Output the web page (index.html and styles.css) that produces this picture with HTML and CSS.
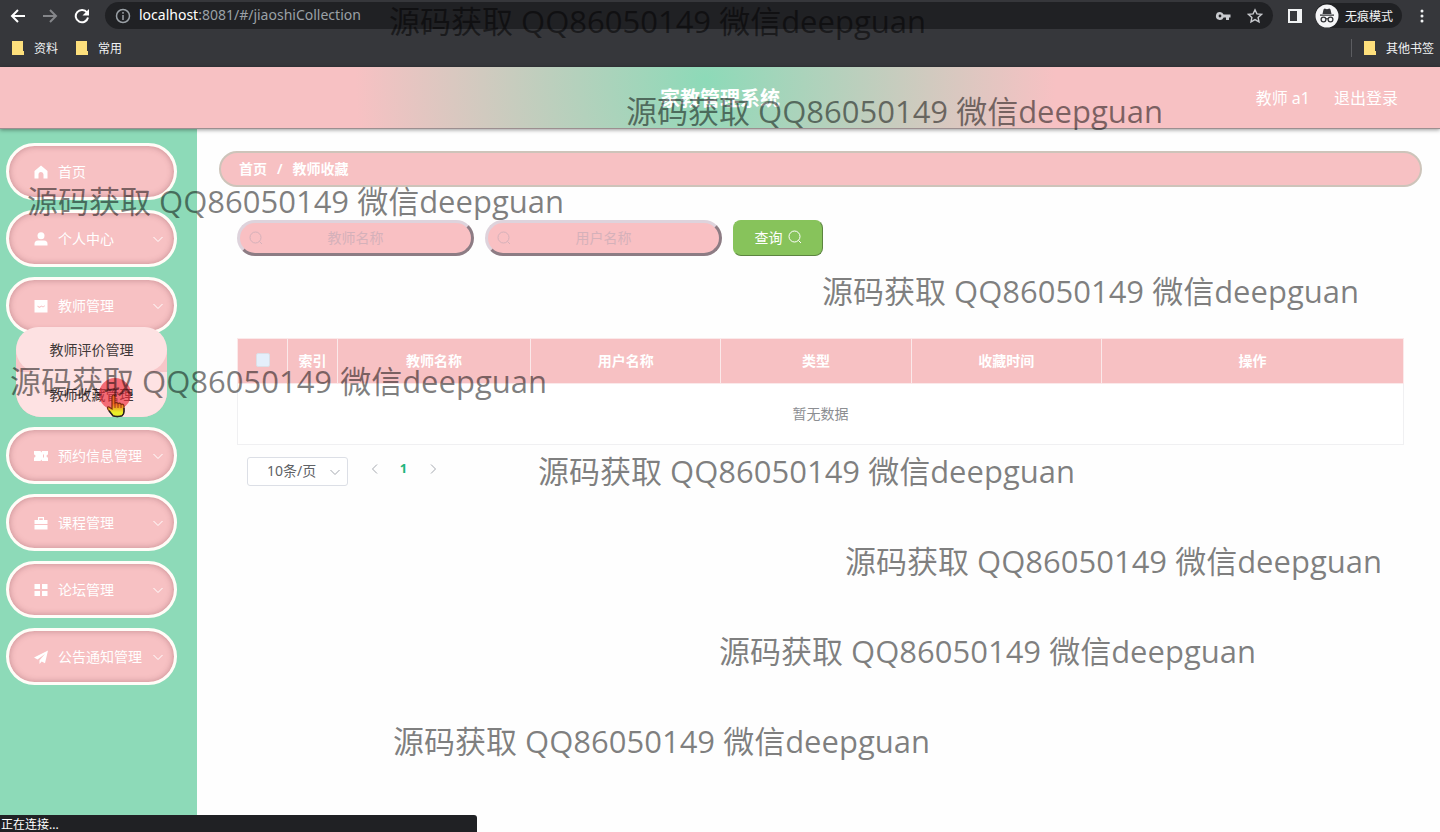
FILE: index.html
```html
<!DOCTYPE html>
<html lang="zh-CN">
<head>
    <meta charset="UTF-8">
    <meta name="viewport" content="width=device-width, initial-scale=1.0">
    <title>家教管理系统</title>
    <link rel="stylesheet" href="styles.css">
</head>
<body>
    <!-- browser bar -->
    <div class="browser">
        <div class="toolbar">
            <button class="tool-btn" aria-label="后退"><svg width="16" height="16" viewBox="0 0 16 16" fill="none" stroke="#fff" stroke-width="2"><path d="M15 8H2M8 2L2 8l6 6"/></svg></button>
            <button class="tool-btn" aria-label="前进"><svg width="16" height="16" viewBox="0 0 16 16" fill="none" stroke="#85868a" stroke-width="2"><path d="M1 8h13M8 2l6 6-6 6"/></svg></button>
            <button class="tool-btn" aria-label="刷新"><svg width="16" height="16" viewBox="0 0 16 16"><path d="M13 4.5A6.2 6.2 0 1 0 14 9.500" fill="none" stroke="#fff" stroke-width="2"/><path d="M15 1v6.500H8.500z" fill="#fff"/></svg></button>
            <div class="address">
                <svg width="16" height="16" viewBox="0 0 16 16" fill="none" stroke="#9aa0a6" stroke-width="1.500"><circle cx="8" cy="8" r="6.500"/><path d="M8 7v5M8 4v1.700"/></svg>
                <span class="url"><span class="host">localhost</span>:8081/#/jiaoshiCollection</span>
                <svg width="16" height="16" viewBox="0 0 16 16"><path d="M5 4a4 4 0 1 0 3.600 5.500H11V12h3V9.500h1.500v-3H8.600A4 4 0 0 0 5 4zm0 2.600a1.400 1.400 0 1 1 0 2.800 1.400 1.400 0 0 1 0-2.800z" fill="#c8cace"/></svg>
                <svg width="16" height="16" viewBox="0 0 16 16"><path d="M8 1.800l1.900 4.100 4.500.5-3.300 3 .9 4.400L8 11.600l-4 2.200.9-4.400-3.300-3 4.500-.5z" fill="none" stroke="#c8cace" stroke-width="1.400"/></svg>
            </div>
            <button class="tool-btn panel-btn" aria-label="侧边栏"><svg width="16" height="16" viewBox="0 0 16 16"><path d="M1 1h14v14H1zM3 3v10h7V3z" fill="#f1f3f4" fill-rule="evenodd"/></svg></button>
            <button class="incognito">
                <svg width="24" height="24" viewBox="0 0 24 24"><circle cx="12" cy="12" r="11.500" fill="#f5f5f7"/><path d="M8.500 5.500l1-1 2.500.7 2.500-.7 1 1 1 4.500h-9zM5 10.500h14v1.200H5z" fill="#35363a"/><g fill="none" stroke="#35363a" stroke-width="1.300"><circle cx="8.500" cy="15.500" r="2.400"/><circle cx="15.500" cy="15.500" r="2.400"/><path d="M11 15q1-.8 2 0"/></g></svg>
                <span>无痕模式</span>
            </button>
            <button class="tool-btn" aria-label="菜单"><svg width="16" height="16" viewBox="0 0 16 16" fill="#f1f3f4"><circle cx="8" cy="3" r="1.500"/><circle cx="8" cy="8" r="1.500"/><circle cx="8" cy="13" r="1.500"/></svg></button>
        </div>
        <div class="bookmarks">
            <a href="#"><svg width="12" height="14" viewBox="0 0 12 14"><path d="M0 0h11v10h1v4H0z" fill="#fddf7c"/></svg>资料</a>
            <a href="#"><svg width="12" height="14" viewBox="0 0 12 14"><path d="M0 0h11v10h1v4H0z" fill="#fddf7c"/></svg>常用</a>
            <a href="#" class="other"><svg width="12" height="14" viewBox="0 0 12 14"><path d="M0 0h11v10h1v4H0z" fill="#fddf7c"/></svg>其他书签</a>
        </div>
    </div>

    <header class="header">
        <h1>家教管理系统</h1>
        <div class="user">
            <span>教师 a1</span>
            <a href="#">退出登录</a>
        </div>
    </header>

    <div class="container">
        <nav class="sidebar">
            <a href="#" class="menu-item">
                <svg class="icon" viewBox="0 0 14 14"><path d="M7 0.500L0.500 6v7.500h4V9.500a2.500 2.500 0 0 1 5 0v4h4V6z"/></svg>
                <span>首页</span>
            </a>
            <a href="#" class="menu-item">
                <svg class="icon" viewBox="0 0 14 14"><circle cx="7" cy="3.700" r="3.500"/><path d="M0.500 13.500V12q0-3.500 3.500-3.500h6q3.500 0 3.500 3.500v1.500z"/></svg>
                <span>个人中心</span>
                <svg class="arrow" viewBox="0 0 10 10"><path d="M0.500 3L5 7.500 9.500 3"/></svg>
            </a>
            <a href="#" class="menu-item">
                <svg class="icon" viewBox="0 0 14 14"><path d="M0.500 1h13v12.500h-13zM3.500 6.500v1.200l2 1.300 2-1.500 1.500 1 2-1.500V6.200L9 7.500l-1.500-1-2 1.300z" fill-rule="evenodd"/></svg>
                <span>教师管理</span>
                <svg class="arrow" viewBox="0 0 10 10"><path d="M0.500 3L5 7.500 9.500 3"/></svg>
            </a>
            <div class="submenu">
                <a href="#">教师评价管理</a>
                <a href="#">教师收藏管理</a>
                <svg class="pointer" width="36" height="44" viewBox="0 0 36 44">
                    <defs>
                        <linearGradient id="hand" x1="0" y1="0" x2="0" y2="1">
                            <stop offset="0.400" stop-color="#f0641e"/>
                            <stop offset="0.800" stop-color="#e8ee28"/>
                        </linearGradient>
                    </defs>
                    <circle cx="17" cy="17" r="16" fill="#ee2b3a" fill-opacity="0.650"/>
                    <path d="M14 20q0-2 1.500-2t1.500 2v6q2-1 3 .5 2-1 3 .8 3-.8 3 2v5q0 3-2 4.500-5 1.500-9 0l-5-6.300q-1.500-3 1-2.500l3 2z" fill="url(#hand)" stroke="#7a2a10" stroke-width="1.200"/>
                    <path d="M26 31v3.300q0 3-2 4.500-5 1.500-9 0l-4-5" fill="none" stroke="#222" stroke-width="1.400"/>
                    <path d="M17 26v5M20 27v4M23 28v3" fill="none" stroke="#a03018"/>
                </svg>
            </div>
            <a href="#" class="menu-item">
                <svg class="icon" viewBox="0 0 14 14"><path d="M0 2h6.500l.8 1.500.8-1.500H14v3.500a1.500 1.500 0 0 0 0 3V12H8.100l-.8-1.500-.8 1.500H0V8.500a1.500 1.500 0 0 0 0-3zM9 5.500v3h1v-3z" fill-rule="evenodd"/></svg>
                <span>预约信息管理</span>
                <svg class="arrow" viewBox="0 0 10 10"><path d="M0.500 3L5 7.500 9.500 3"/></svg>
            </a>
            <a href="#" class="menu-item">
                <svg class="icon" viewBox="0 0 14 14"><path d="M4 4V1h6v3h3.500v4H.5V4zM5.200 4h3.600V2.200H5.200zM.5 9h13v4.500H.5z" fill-rule="evenodd"/></svg>
                <span>课程管理</span>
                <svg class="arrow" viewBox="0 0 10 10"><path d="M0.500 3L5 7.500 9.500 3"/></svg>
            </a>
            <a href="#" class="menu-item">
                <svg class="icon" viewBox="0 0 14 14"><path d="M.5 1h5.500v5H.5zM8 1h5.500v5H8zM.5 8h5.500v5H.5zM8 8h5.500v5H8z"/></svg>
                <span>论坛管理</span>
                <svg class="arrow" viewBox="0 0 10 10"><path d="M0.500 3L5 7.500 9.500 3"/></svg>
            </a>
            <a href="#" class="menu-item">
                <svg class="icon" viewBox="0 0 14 14"><path d="M14 0.500L0 7.500l3.500 2L11 4 5.500 10.300V14l2.200-2.500 3.300 1.700z"/></svg>
                <span>公告通知管理</span>
                <svg class="arrow" viewBox="0 0 10 10"><path d="M0.500 3L5 7.500 9.500 3"/></svg>
            </a>
        </nav>

        <main class="main">
            <div class="breadcrumb">
                <a href="#">首页</a>
                <span>/</span>
                <span>教师收藏</span>
            </div>

            <div class="content">
                <form class="search">
                    <div class="field">
                        <svg viewBox="0 0 14 14"><circle cx="6.500" cy="6.500" r="5.500"/><path d="M10.500 10.500L13 13"/></svg>
                        <input type="text" aria-label="教师名称" placeholder="教师名称">
                    </div>
                    <div class="field">
                        <svg viewBox="0 0 14 14"><circle cx="6.500" cy="6.500" r="5.500"/><path d="M10.500 10.500L13 13"/></svg>
                        <input type="text" aria-label="用户名称" placeholder="用户名称">
                    </div>
                    <button type="button" class="btn">查询
                        <svg viewBox="0 0 14 14"><circle cx="6.500" cy="6.500" r="5.500"/><path d="M10.500 10.500L13 13"/></svg>
                    </button>
                </form>

                <table class="table">
                    <thead>
                        <tr>
                            <th class="col-small"><input type="checkbox" aria-label="全选"></th>
                            <th class="col-small">索引</th>
                            <th class="col-name">教师名称</th>
                            <th>用户名称</th>
                            <th>类型</th>
                            <th>收藏时间</th>
                            <th class="col-action">操作</th>
                        </tr>
                    </thead>
                    <tbody>
                        <tr>
                            <td colspan="7">暂无数据</td>
                        </tr>
                    </tbody>
                </table>

                <div class="pagination">
                    <div class="page-size">
                        <select aria-label="每页条数">
                            <option>10条/页</option>
                        </select>
                        <svg viewBox="0 0 10 10"><path d="M0.500 3L5 7.500 9.500 3"/></svg>
                    </div>
                    <button class="page-btn" aria-label="上一页"><svg viewBox="0 0 10 10"><path d="M7 0.500L2.500 5 7 9.500"/></svg></button>
                    <button class="page-btn active">1</button>
                    <button class="page-btn" aria-label="下一页"><svg viewBox="0 0 10 10"><path d="M3 0.500L7.500 5 3 9.500"/></svg></button>
                </div>
            </div>
        </main>
    </div>

    <div class="status">正在连接...</div>

    <div class="watermarks">
        <span class="mark-1">源码获取 QQ86050149 微信deepguan</span>
        <span class="mark-2">源码获取 QQ86050149 微信deepguan</span>
        <span class="mark-3">源码获取 QQ86050149 微信deepguan</span>
        <span class="mark-4">源码获取 QQ86050149 微信deepguan</span>
        <span class="mark-5">源码获取 QQ86050149 微信deepguan</span>
        <span class="mark-6">源码获取 QQ86050149 微信deepguan</span>
        <span class="mark-7">源码获取 QQ86050149 微信deepguan</span>
        <span class="mark-8">源码获取 QQ86050149 微信deepguan</span>
        <span class="mark-9">源码获取 QQ86050149 微信deepguan</span>
    </div>
</body>
</html>
```
FILE: styles.css
```css
* {
    box-sizing: border-box;
}
body {
    font-family: "Noto Sans", "Noto Sans CJK SC", sans-serif;
    font-size: 14px;
    margin: 0;
    min-height: 100vh;
    display: flex;
    flex-direction: column;
    position: relative;
    overflow: hidden;
    background: #fefefe;
}
a {
    color: inherit;
    text-decoration: none;
}
button, input, select {
    font-family: inherit;
    font-size: 14px;
}
button {
    border: none;
    padding: 0;
    background: none;
    color: inherit;
    cursor: pointer;
}

/* browser bar */
.browser {
    background: #36373b;
    color: #f1f3f4;
    height: 67px;
    font-size: 12px;
}
.toolbar {
    display: flex;
    align-items: center;
    height: 31px;
    padding: 0 10px;
    gap: 16px;
}
.tool-btn {
    display: flex;
}
.address {
    flex: 1;
    display: flex;
    align-items: center;
    gap: 16px;
    height: 27px;
    padding: 0 10px;
    margin: 0 -2px 0 -1px;
    border-radius: 14px;
    background: #202124;
}
.url {
    flex: 1;
    margin-left: -8px;
    padding-bottom: 2px;
    font-size: 14px;
    color: #9aa0a6;
}
.host {
    color: #fff;
}
.incognito {
    display: flex;
    align-items: center;
    gap: 6px;
    height: 25px;
    margin: 0 -4px 0 -5px;
    padding-right: 9px;
    border-radius: 13px;
    background: #202124;
    font-size: 12px;
}
.panel-btn {
    margin-right: 1px;
}
.bookmarks {
    display: flex;
    align-items: center;
    height: 34px;
    padding: 0 6px 0 12px;
    gap: 18px;
}
.bookmarks a {
    display: flex;
    align-items: center;
    gap: 10px;
}
.bookmarks .other {
    margin-left: auto;
    padding-left: 12px;
    border-left: 1px solid #5c5d61;
}

/* header */
.header {
    position: relative;
    height: 62px;
    display: flex;
    align-items: center;
    justify-content: center;
    color: #fff;
    background: radial-gradient(circle at 49% 20%, #8ddab8 0, #f7c1c3 350px);
    border-bottom: 1px solid #9c8f90;
    box-shadow: 0 1px 4px rgba(0, 0, 0, 0.4);
}
.header h1 {
    margin: 0;
    font-size: 20px;
}
.user {
    position: absolute;
    right: 42px;
    display: flex;
    gap: 24px;
    padding-bottom: 2px;
    font-size: 16px;
}

.container {
    flex: 1;
    display: flex;
}

/* sidebar */
.sidebar {
    width: 197px;
    padding: 14px 20px 14px 6px;
    background: #8ddab8;
}
.menu-item {
    display: flex;
    align-items: center;
    height: 57px;
    margin-bottom: 10px;
    padding: 0 11px 0 25px;
    border: 3px solid #fffdf8;
    border-radius: 30px;
    background: #f7c1c3;
    box-shadow: inset 0 0 6px rgba(120, 60, 70, 0.4);
    color: #fff;
}
.menu-item span {
    flex: 1;
    margin-left: 10px;
    padding-bottom: 2px;
    white-space: nowrap;
}
.icon {
    width: 14px;
    height: 14px;
    fill: #fff;
}
.arrow {
    width: 10px;
    height: 10px;
    fill: none;
    stroke: #fff;
}
.submenu {
    position: relative;
    margin: -17px 10px 10px;
    border-radius: 25px;
    background: #f7c6c8;
    color: #403838;
}
.submenu a {
    display: block;
    height: 45px;
    line-height: 45px;
    text-align: center;
    border-radius: 25px;
    background: #fde1e2;
}
.submenu a + a {
    border-radius: 0 0 25px 25px;
    background: rgba(254, 228, 229, 0.9);
}
.pointer {
    position: absolute;
    left: 82px;
    top: 50px;
}

/* main */
.main {
    flex: 1;
    padding: 22px 18px 0 22px;
}
.breadcrumb {
    display: flex;
    align-items: center;
    gap: 10px;
    height: 36px;
    padding: 0 18px 2px;
    border: 2px solid #cdc4ba;
    border-radius: 18px;
    background: #f7c1c3;
    color: #fff;
    font-weight: 600;
}
.content {
    padding: 33px 18px 0;
}
.search {
    display: flex;
    gap: 11px;
    margin-bottom: 82px;
}
.field {
    position: relative;
    width: 237px;
}
.field svg {
    position: absolute;
    left: 12px;
    top: 11px;
    width: 14px;
    height: 14px;
    fill: none;
    stroke: #d5b1ba;
}
.field input {
    width: 100%;
    height: 36px;
    padding: 0 30px 2px;
    border: 3px solid;
    border-color: #ded3dc #8d7c84 #8d7c84 #ded3dc;
    border-radius: 18px;
    background: #f9c0c3;
    text-align: center;
}
.field input::placeholder {
    color: #d5b1ba;
}
.btn {
    display: flex;
    align-items: center;
    justify-content: center;
    gap: 5px;
    width: 90px;
    height: 36px;
    padding-bottom: 2px;
    border: 1px solid;
    border-color: #87c35b #5c8440 #5c8440 #87c35b;
    border-radius: 8px;
    background: #87c35b;
    color: #fff;
}
.btn svg {
    width: 14px;
    height: 14px;
    fill: none;
    stroke: #fff;
}

.table {
    width: 100%;
    table-layout: fixed;
    border-collapse: collapse;
}
.table th {
    height: 45px;
    padding: 0 0 2px;
    border: 1px solid #fbe9ea;
    background: #f7c1c3;
    color: #fff;
}
.table td {
    height: 61px;
    padding: 0 0 2px;
    border: 1px solid #f0f0f2;
    background: #fff;
    color: #8c8e92;
    text-align: center;
}
.table .col-small {
    width: 50px;
}
.table .col-name {
    width: 193px;
}
.table .col-action {
    width: 302px;
}
.table input {
    appearance: none;
    display: block;
    width: 14px;
    height: 14px;
    margin: 0 auto;
    border: 1px solid #dcdfe6;
    border-radius: 2px;
    background: #e4effb;
}

.pagination {
    display: flex;
    align-items: center;
    padding: 11px 10px;
}
.page-size {
    position: relative;
    width: 101px;
    margin-right: 12px;
}
.page-size select {
    appearance: none;
    display: block;
    width: 100%;
    height: 29px;
    padding: 0 19px 2px;
    border: 1px solid #dcdfe6;
    border-radius: 3px;
    background: #fff;
    color: #606266;
}
.page-size svg {
    position: absolute;
    right: 8px;
    top: 10px;
}
.pagination svg {
    width: 10px;
    height: 10px;
    fill: none;
    stroke: #a4a8af;
}
.page-btn {
    width: 29px;
    height: 24px;
    margin-bottom: 7px;
    color: #606266;
}
.page-btn.active {
    color: #1fb57c;
    font-size: 13px;
    font-weight: 700;
}

/* connection status */
.status {
    position: absolute;
    left: 0;
    bottom: 0;
    width: 477px;
    height: 17px;
    padding-left: 1px;
    border-top-right-radius: 3px;
    background: #202124;
    color: #fff;
    font-size: 12px;
    line-height: 20px;
    overflow: hidden;
}

/* watermark text over the whole page */
.watermarks {
    position: absolute;
    left: 0;
    top: -24px;
    display: flex;
    flex-direction: column;
    color: rgba(0, 0, 0, 0.5);
    font-family: "Open Sans", "Noto Sans CJK SC", sans-serif;
    font-size: 31px;
    line-height: 90px;
    white-space: nowrap;
    pointer-events: none;
}
.mark-1 {
    margin-left: 389px;
}
.mark-2 {
    margin-left: 626px;
}
.mark-3 {
    margin-left: 27px;
}
.mark-4 {
    margin-left: 822px;
}
.mark-5 {
    margin-left: 10px;
}
.mark-6 {
    margin-left: 538px;
}
.mark-7 {
    margin-left: 845px;
}
.mark-8 {
    margin-left: 719px;
}
.mark-9 {
    margin-left: 393px;
}
```
